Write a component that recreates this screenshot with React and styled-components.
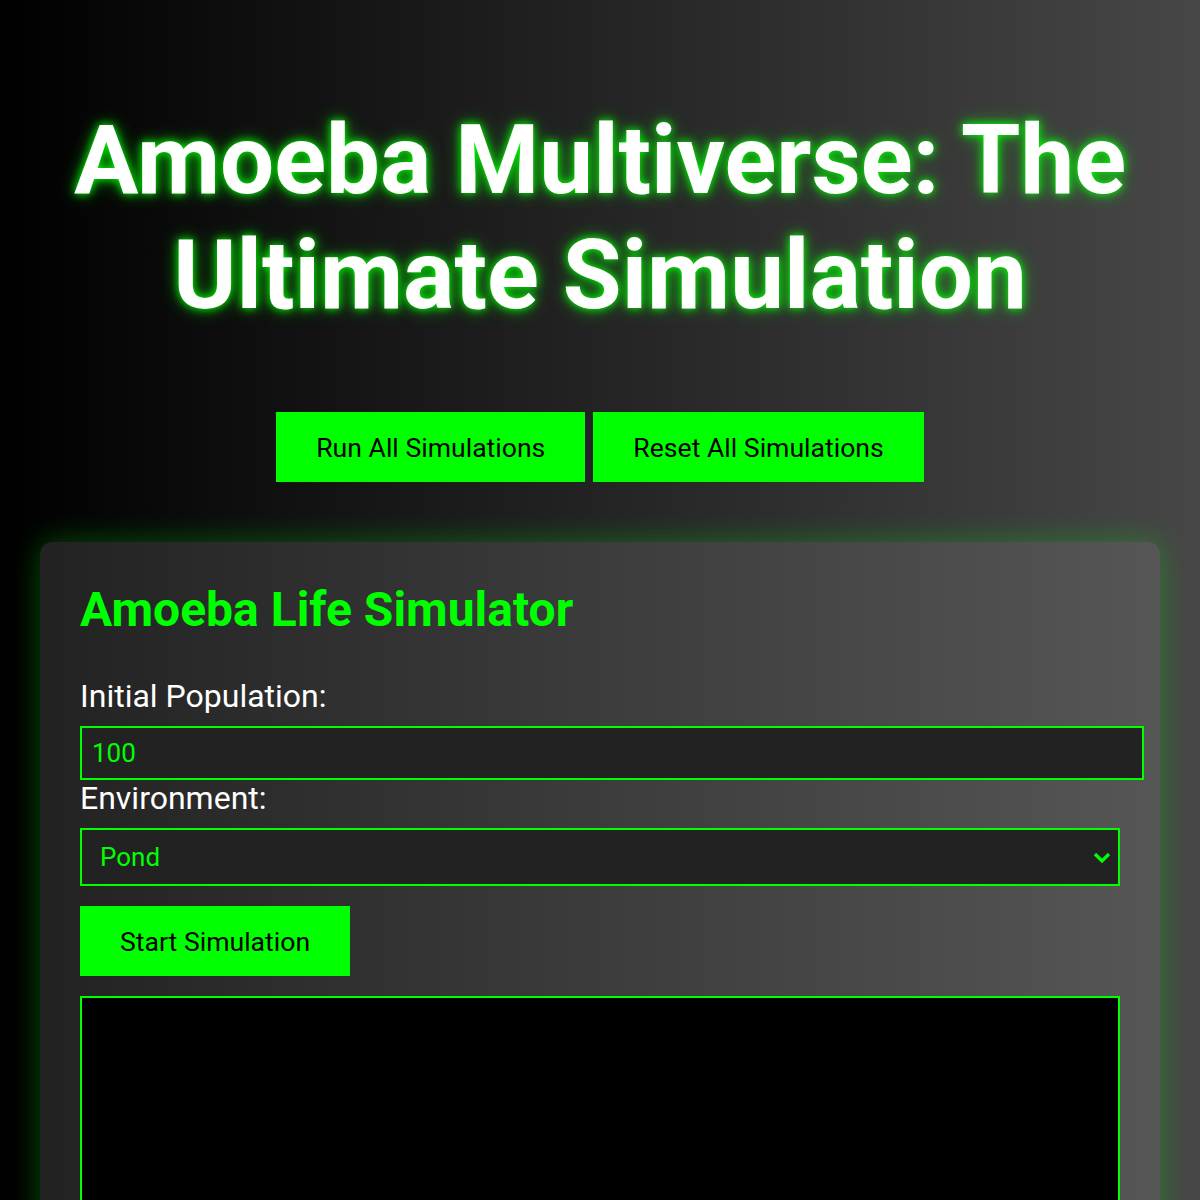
import React, { useState } from 'react';
import styled, { createGlobalStyle } from 'styled-components';

const GlobalStyle = createGlobalStyle`
  html, body {
    margin: 0;
    padding: 0;
  }
  body {
    font-family: Roboto, 'Liberation Sans', Arial, sans-serif;
    background: linear-gradient(to right, #000000, #474747);
    min-height: 1200px;
    color: #ffffff;
  }
  * {
    box-sizing: border-box;
  }
`;

const Page = styled.div`
  padding: 40px;
  min-height: 1200px;
`;

const Title = styled.h1`
  margin: 63px 0 0;
  font-size: 96px;
  font-weight: 700;
  line-height: 1.2;
  text-align: center;
  color: #ffffff;
  text-shadow: 0 0 8px #00ff00, 0 0 18px rgba(0, 255, 0, 0.55);
`;

const ButtonRow = styled.div`
  display: flex;
  justify-content: center;
  gap: 8px;
  margin-top: 79px;
`;

const GreenButton = styled.button`
  background: #00ff00;
  color: #000000;
  border: none;
  border-radius: 0;
  padding: 0 40px;
  height: 70px;
  font-family: Roboto, 'Liberation Sans', Arial, sans-serif;
  font-size: 26.6px;
  cursor: pointer;
`;

const Card = styled.section`
  margin-top: 60px;
  padding: 39px 40px 40px;
  border-radius: 12px;
  background: linear-gradient(to right, #222222, #565656);
  box-shadow: 0 0 30px rgba(0, 255, 0, 0.3);
`;

const CardTitle = styled.h2`
  margin: 0 0 40px;
  font-size: 48px;
  font-weight: 700;
  line-height: normal;
  color: #00ff00;
`;

const Label = styled.label`
  display: block;
  height: 38px;
  margin-bottom: 10px;
  font-size: 32px;
  line-height: 37px;
  color: #ffffff;
`;

const NumberInput = styled.input`
  display: block;
  box-sizing: border-box;
  width: calc(100% + 24px);
  height: 54px;
  padding: 0 10px;
  border: 2px solid #00ff00;
  background: #222222;
  color: #00ff00;
  font-family: Roboto, 'Liberation Sans', Arial, sans-serif;
  font-size: 26px;
  outline: none;
`;

const SelectWrap = styled.div`
  position: relative;
  margin-bottom: 20px;
`;

const Select = styled.select`
  appearance: none;
  display: block;
  width: 100%;
  height: 58px;
  padding: 0 40px 0 18px;
  border: 2px solid #00ff00;
  border-radius: 0;
  background: #222222;
  color: #00ff00;
  font-family: Roboto, 'Liberation Sans', Arial, sans-serif;
  font-size: 26px;
  outline: none;
`;

const Chevron = styled.svg`
  position: absolute;
  right: 9px;
  top: 50%;
  transform: translateY(-50%);
  pointer-events: none;
`;

const SimCanvas = styled.div`
  margin-top: 20px;
  height: 400px;
  border: 2px solid #00ff00;
  background: #000000;
`;

const App = () => {
  const [population, setPopulation] = useState('100');
  const [environment, setEnvironment] = useState('pond');

  return (
    <>
      <GlobalStyle />
      <Page>
        <Title>Amoeba Multiverse: The Ultimate Simulation</Title>
        <ButtonRow>
          <GreenButton>Run All Simulations</GreenButton>
          <GreenButton>Reset All Simulations</GreenButton>
        </ButtonRow>
        <Card>
          <CardTitle>Amoeba Life Simulator</CardTitle>
          <Label htmlFor="pop">Initial Population:</Label>
          <NumberInput
            id="pop"
            type="number"
            value={population}
            onChange={(e) => setPopulation(e.target.value)}
          />
          <Label htmlFor="env">Environment:</Label>
          <SelectWrap>
            <Select id="env" value={environment} onChange={(e) => setEnvironment(e.target.value)}>
              <option value="pond">Pond</option>
              <option value="ocean">Ocean</option>
              <option value="soil">Soil</option>
            </Select>
            <Chevron width="18" height="12" viewBox="0 0 18 12">
              <polyline points="2,3 9,10 16,3" fill="none" stroke="#00ff00" strokeWidth="3.2" />
            </Chevron>
          </SelectWrap>
          <GreenButton>Start Simulation</GreenButton>
          <SimCanvas />
        </Card>
      </Page>
    </>
  );
};

export default App;
